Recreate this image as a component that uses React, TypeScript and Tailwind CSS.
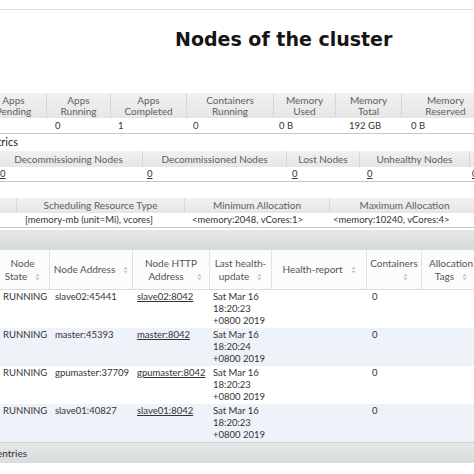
import React from 'react';

const SortIcon: React.FC = () => (
  <svg className="inline-block ml-[8px] align-middle" width="5" height="8" viewBox="0 0 5 8">
    <path d="M2.5 0.5L4.6 3.2H0.4Z M2.5 7.5L0.4 4.8H4.6Z" fill="#c6c6c6" />
  </svg>
);

const clusterHead = ['Apps Pending', 'Apps Running', 'Apps Completed', 'Containers Running', 'Memory Used', 'Memory Total', 'Memory Reserved'];
const clusterData = ['0', '0', '1', '0', '0 B', '192 GB', '0 B'];
const clusterPad = ['pl-[7px]', 'pl-[8px]', 'pl-[7px]', 'pl-[6px]', 'pl-[5px]', 'pl-[13px]', 'pl-[9px]'];

const nodeMetricsHead = ['Decommissioning Nodes', 'Decommissioned Nodes', 'Lost Nodes', 'Unhealthy Nodes', 'Rebooted Nodes'];
const nodeMetricsPad = ['pl-[5px]', 'pl-[4px]', 'pl-[5px]', 'pl-[7px]', 'pl-[2px]'];

const schedHead = ['Scheduler Type', 'Scheduling Resource Type', 'Minimum Allocation', 'Maximum Allocation'];
const schedData = ['', '[memory-mb (unit=Mi), vcores]', '<memory:2048, vCores:1>', '<memory:10240, vCores:4>'];
const schedPad = ['pl-[7px]', 'pl-[8px]', 'pl-[7px]', 'pl-[3px]'];

const nodes = [
  { addr: 'slave02:45441', http: 'slave02:8042', time: '18:20:23' },
  { addr: 'master:45393', http: 'master:8042', time: '18:20:24' },
  { addr: 'gpumaster:37709', http: 'gpumaster:8042', time: '18:20:23' },
  { addr: 'slave01:40827', http: 'slave01:8042', time: '18:20:23' },
];

export default function App() {
  return (
    <div className="w-[474px] h-[474px] overflow-hidden bg-white font-['Lato',sans-serif] text-[10px] text-[#333]">
      <div className="h-[9px]" />
      <div className="h-px bg-[#e0e0e0]" />

      <h1 className="mt-[18px] ml-[175px] whitespace-nowrap font-['DejaVu_Sans',sans-serif] text-[19px] font-bold leading-[23px] text-[#151515]">
        Nodes of the cluster
      </h1>

      {/* Cluster Metrics */}
      <div className="mt-[42px] ml-[-19px] w-[509px]">
        <div className="grid h-[25px] grid-cols-[66px_64px_76px_87px_62px_66px_88px] bg-gradient-to-b from-[#f1f1f1] to-[#e6e6e6] text-[#606060]">
          {clusterHead.map((h) => (
            <div key={h} className="flex items-center justify-center border-r border-[#d6d6d6] text-center leading-[11px]">
              {h.split(' ')[0]}
              <br />
              {h.split(' ')[1]}
            </div>
          ))}
        </div>
        <div className="grid h-[16px] grid-cols-[66px_64px_76px_87px_62px_66px_88px] border-b border-[#c9c9c9] text-[9.5px] leading-[15px]">
          {clusterData.map((d, i) => (
            <div key={i} className={clusterPad[i]}>
              {d}
            </div>
          ))}
        </div>
      </div>

      <div className="flex h-[17px] w-[18px] items-center justify-end whitespace-nowrap text-[11px] text-[#222]">
        Cluster Nodes Metrics
      </div>

      {/* Cluster Nodes Metrics */}
      <div className="ml-[-5px] w-[600px]">
        <div className="grid h-[16px] grid-cols-[148px_144px_73px_110px_120px] bg-gradient-to-b from-[#f1f1f1] to-[#e6e6e6] text-[#606060]">
          {nodeMetricsHead.map((h) => (
            <div key={h} className="flex items-center justify-center whitespace-nowrap border-r border-[#d6d6d6]">
              {h}
            </div>
          ))}
        </div>
        <div className="grid h-[15px] grid-cols-[148px_144px_73px_110px_120px] border-b border-[#c9c9c9] text-[9.5px] leading-[14px]">
          {nodeMetricsPad.map((p, i) => (
            <div key={i} className={p}>
              <span className="underline">0</span>
            </div>
          ))}
        </div>
      </div>

      {/* Scheduler Metrics */}
      <div className="mt-[16px] ml-[-103px] w-[583px]">
        <div className="grid h-[15px] grid-cols-[120px_168px_145px_150px] bg-gradient-to-b from-[#f1f1f1] to-[#e6e6e6] text-[#606060]">
          {schedHead.map((h) => (
            <div key={h} className="flex items-center justify-center whitespace-nowrap border-r border-[#d6d6d6]">
              {h}
            </div>
          ))}
        </div>
        <div className="grid h-[15px] grid-cols-[120px_168px_145px_150px] border-b border-[#c9c9c9] text-[9.5px] leading-[14px]">
          {schedData.map((d, i) => (
            <div key={i} className={`${schedPad[i]} whitespace-nowrap`}>
              {d}
            </div>
          ))}
        </div>
      </div>

      {/* toolbar */}
      <div className="mt-[2px] h-[20px] border-t border-[#e4e6e6] bg-gradient-to-b from-[#e4e7e7] to-[#d6dada]" />

      {/* Nodes table */}
      <div className="ml-[-4px] w-[484px]">
        <div className="grid h-[40px] grid-cols-[54px_83px_77px_62px_95px_55px_58px] border-b border-[#dcdcdc] bg-[#fcfcfc] leading-[13px] text-[#555]">
          <div className="flex items-center justify-center border-r border-[#e2e2e2] text-center">
            <div>
              Node
              <br />
              State<SortIcon />
            </div>
          </div>
          <div className="flex items-center justify-center border-r border-[#e2e2e2] text-center">
            <div>
              Node Address<SortIcon />
            </div>
          </div>
          <div className="flex items-center justify-center border-r border-[#e2e2e2] text-center">
            <div>
              Node HTTP
              <br />
              <span className="ml-[8px]">Address</span>
              <span className="ml-[5px]">
                <SortIcon />
              </span>
            </div>
          </div>
          <div className="flex items-center justify-center border-r border-[#e2e2e2] text-center">
            <div>
              Last health-
              <br />
              update<SortIcon />
            </div>
          </div>
          <div className="flex items-center justify-center border-r border-[#e2e2e2] text-center">
            <div>
              Health-report<SortIcon />
            </div>
          </div>
          <div className="flex items-center justify-center border-r border-[#e2e2e2] text-center">
            <div>
              Containers
              <br />
              <span className="ml-[14px]">
                <SortIcon />
              </span>
            </div>
          </div>
          <div className="flex items-center justify-center text-center">
            <div>
              Allocation
              <br />
              Tags<SortIcon />
            </div>
          </div>
        </div>

        {nodes.map((n, i) => (
          <div
            key={n.addr}
            className={`grid h-[38px] grid-cols-[54px_83px_77px_62px_95px_55px_58px] py-[1px] text-[9.5px] leading-[12px] ${
              i % 2 === 1 ? 'bg-[#eef2f9]' : 'bg-white'
            }`}
          >
            <div className="pl-[7px]">RUNNING</div>
            <div className="pl-[5px] whitespace-nowrap">{n.addr}</div>
            <div className="pl-[4px] whitespace-nowrap">
              <span className="underline">{n.http}</span>
            </div>
            <div className="pl-[3px] whitespace-nowrap">
              Sat Mar 16
              <br />
              {n.time}
              <br />
              +0800 2019
            </div>
            <div />
            <div className="pl-[5px]">0</div>
            <div />
          </div>
        ))}
      </div>

      {/* footer toolbar */}
      <div className="flex h-[21px] items-center border-t border-[#cfd3d3] bg-gradient-to-b from-[#e6e8e8] to-[#d8dcdc]">
        <div className="flex w-[27px] justify-end whitespace-nowrap">Showing 1 to 4 of 4 entries</div>
      </div>
    </div>
  );
}
